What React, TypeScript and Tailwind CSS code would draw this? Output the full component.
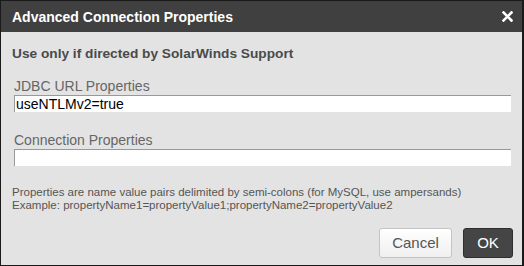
import React, { useState } from 'react';

const App: React.FC = () => {
  const [jdbc, setJdbc] = useState('useNTLMv2=true');
  const [conn, setConn] = useState('');

  return (
    <div
      className="w-[524px] h-[266px] bg-[#e3e3e3] border-t border-l border-b border-r-2 border-[#1a1a1a] flex flex-col"
      style={{ fontFamily: '"Liberation Sans", Arial, sans-serif' }}
    >
      {/* Title bar */}
      <div className="h-[31px] shrink-0 bg-[#404040] flex items-center justify-between pl-[11px] pr-[7px]">
        <span className="text-white font-bold text-[14px] leading-none">Advanced Connection Properties</span>
        <button className="text-white w-[16px] h-[16px] flex items-center justify-center">
          <svg width="11" height="11" viewBox="0 0 11 11">
            <path d="M1.5 1.5 L9.5 9.5 M9.5 1.5 L1.5 9.5" stroke="#fff" strokeWidth="2.6" strokeLinecap="square" />
          </svg>
        </button>
      </div>

      {/* Body */}
      <div className="flex-1 flex flex-col pl-[11px] pr-[11px]">
        <div className="mt-[14px] text-[13.7px] font-bold text-[#4a4a4a] leading-[15px]">
          Use only if directed by SolarWinds Support
        </div>

        <div className="ml-[2px] mt-[17px] flex flex-col">
          <label className="text-[14px] text-[#666] leading-[16px]">JDBC URL Properties</label>
          <input
            value={jdbc}
            onChange={(e) => setJdbc(e.target.value)}
            className="mt-[1px] h-[17px] w-full bg-white border-t border-l border-[#999] px-[1px] text-[14px] text-black leading-[15px] outline-none"
          />

          <label className="mt-[20px] text-[14px] text-[#666] leading-[16px]">Connection Properties</label>
          <input
            value={conn}
            onChange={(e) => setConn(e.target.value)}
            className="mt-[1px] h-[17px] w-full bg-white border-t border-l border-[#999] px-[1px] text-[14px] text-black leading-[15px] outline-none"
          />
        </div>

        <div className="mt-[20px] text-[11.5px] text-[#555] leading-[13px]">
          <div>Properties are name value pairs delimited by semi-colons (for MySQL, use ampersands)</div>
          <div>Example: propertyName1=propertyValue1;propertyName2=propertyValue2</div>
        </div>

        <div className="mt-[16px] flex justify-end gap-[11px] mr-[-2px]">
          <button className="w-[73px] h-[30px] rounded-[3px] border border-[#c4c4c4] bg-gradient-to-b from-white to-[#f0f0f0] text-[15px] text-[#555]">
            Cancel
          </button>
          <button className="w-[50px] h-[30px] rounded-[3px] border border-[#2e2e2e] bg-[#454545] text-[15px] text-white">
            OK
          </button>
        </div>
      </div>
    </div>
  );
};

export default App;
